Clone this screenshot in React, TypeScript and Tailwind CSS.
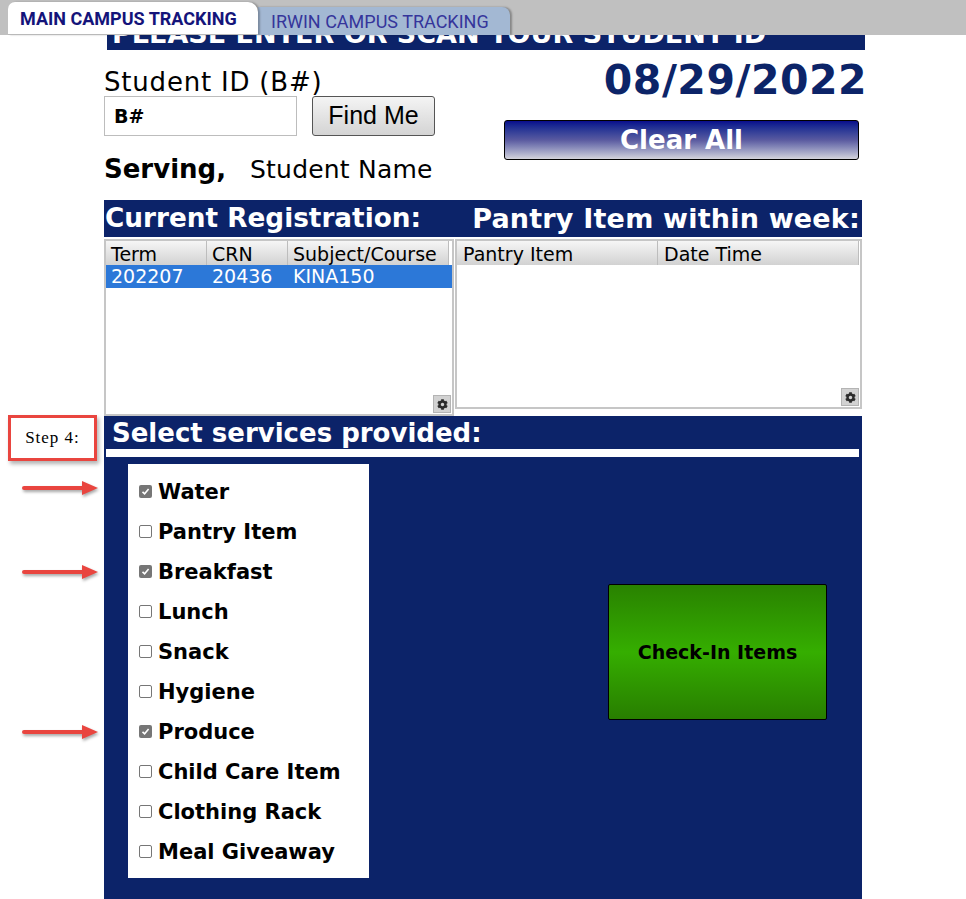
import { FaCog } from 'react-icons/fa';

const SERVICES = [
  { label: 'Water', checked: true },
  { label: 'Pantry Item', checked: false },
  { label: 'Breakfast', checked: true },
  { label: 'Lunch', checked: false },
  { label: 'Snack', checked: false },
  { label: 'Hygiene', checked: false },
  { label: 'Produce', checked: true },
  { label: 'Child Care Item', checked: false },
  { label: 'Clothing Rack', checked: false },
  { label: 'Meal Giveaway', checked: false },
];

function Arrow({ top }: { top: number }) {
  return (
    <svg
      className="absolute left-[20px] drop-shadow-[1px_2px_1.5px_rgba(0,0,0,0.35)]"
      style={{ top }}
      width="80"
      height="16"
      viewBox="0 0 80 16"
    >
      <rect x="2" y="6" width="64" height="4" rx="2" fill="#e9453f" />
      <polygon points="62,1 78,8 62,15" fill="#e9453f" />
    </svg>
  );
}

function Gear() {
  return (
    <div className="absolute bottom-[1px] right-[1px] w-[18px] h-[18px] bg-[#d2d2d2] border border-[#b4b4b4] flex items-center justify-center">
      <FaCog className="w-[11px] h-[11px] text-[#2b2b2b]" />
    </div>
  );
}

function Checkbox({ checked }: { checked: boolean }) {
  if (checked) {
    return (
      <span className="w-[13px] h-[13px] rounded-[2px] bg-[#767676] flex items-center justify-center shrink-0">
        <svg width="9" height="9" viewBox="0 0 9 9">
          <path d="M1.5 4.8 L3.6 6.8 L7.6 2" stroke="white" strokeWidth="1.6" fill="none" />
        </svg>
      </span>
    );
  }
  return <span className="w-[13px] h-[13px] rounded-[2px] border border-[#767676] bg-white shrink-0" />;
}

export default function App() {
  return (
    <div className="relative min-h-[899px] bg-white overflow-hidden font-['DejaVu_Sans',Verdana,sans-serif]">
      {/* Tabs */}
      <div className="relative z-10 h-[35px] bg-[#c0c0c0] flex items-end pl-[8px] font-['Roboto',sans-serif] text-[18px]">
        <div className="h-[33px] w-[250px] bg-white rounded-tl-[7px] rounded-tr-[10px] shadow-[2px_0_2px_rgba(0,0,0,0.25)] border-b border-[#b9b9b9] flex items-center pl-[12px] font-bold text-[#14147a] relative z-10">
          MAIN CAMPUS TRACKING
        </div>
        <div className="h-[28px] w-[252px] bg-[#a3b8d3] rounded-tr-[8px] shadow-[2px_0_2px_rgba(0,0,0,0.3)] flex items-center pl-[13px] text-[#35359b]">
          IRWIN CAMPUS TRACKING
        </div>
      </div>

      <div className="ml-[104px] w-[758px]">
        {/* Banner, top hidden behind the tab bar */}
        <div className="ml-[3px] w-[758px] h-[15px] overflow-hidden bg-[#0c2369]">
          <div className="mt-[-14px] pl-[5px] text-[27px] leading-[26px] font-bold text-white whitespace-nowrap">
            PLEASE ENTER OR SCAN YOUR STUDENT ID
          </div>
        </div>

        {/* Lookup area */}
        <div className="h-[150px] flex justify-between">
          <div className="flex flex-col">
            <div className="mt-[18px] text-[26px] leading-[28px] tracking-[0.8px] text-black">Student ID (B#)</div>
            <div className="flex gap-[15px]">
              <div className="w-[193px] h-[40px] border border-[#bdbdbd] flex items-center pl-[9px] text-[19px] font-bold text-black">
                B#
              </div>
              <button className="w-[123px] h-[40px] border border-[#555] rounded-[3px] bg-gradient-to-b from-[#f4f4f4] to-[#d4d4d4] font-['Liberation_Sans',Arial,sans-serif] text-[25px] text-black">
                Find Me
              </button>
            </div>
            <div className="mt-[18px] flex items-baseline gap-[24px] leading-[30px]">
              <span className="text-[26px] font-bold text-black">Serving,</span>
              <span className="text-[25px] tracking-[0.2px] text-black">Student Name</span>
            </div>
          </div>
          <div className="w-[363px] mr-[-5px] flex flex-col">
            <div className="mt-[10px] text-right text-[41px] leading-[41px] tracking-[0.5px] font-bold text-[#0c2468]">
              08/29/2022
            </div>
            <button className="mt-[19px] w-[355px] h-[40px] rounded-[3px] border border-black bg-gradient-to-b from-[#0a0a8c] via-[#5a5aa0] to-[#d4d4dc] text-white text-[26px] font-bold leading-none">
              Clear All
            </button>
          </div>
        </div>

        {/* Section header */}
        <div className="h-[37px] bg-[#0c2369] flex items-center text-white font-bold leading-[35px] whitespace-nowrap">
          <span className="pl-[1px] text-[26.3px]">Current Registration:</span>
          <span className="ml-auto pr-[2px] text-[27px] tracking-[0.2px]">Pantry Item within week:</span>
        </div>

        {/* Tables */}
        <div className="mt-[2px] flex items-start">
          <div className="relative w-[351px] h-[177px] border-2 border-[#c6c6c6] bg-white text-[19px] leading-[23px]">
            <div className="flex h-[24px] w-[343px] bg-gradient-to-b from-[#f6f6f6] to-[#d2d2d2] text-black">
              <div className="w-[101px] pl-[5px] border-r border-[#bdbdbd] leading-[26px]">Term</div>
              <div className="w-[81px] pl-[5px] border-r border-[#bdbdbd] leading-[26px]">CRN</div>
              <div className="flex-1 pl-[5px] border-r border-[#bdbdbd] leading-[26px]">Subject/Course</div>
            </div>
            <div className="flex h-[23px] bg-[#2c78d8] text-white">
              <div className="w-[101px] pl-[5px]">202207</div>
              <div className="w-[81px] pl-[5px]">20436</div>
              <div className="flex-1 pl-[5px]">KINA150</div>
            </div>
            <Gear />
          </div>
          <div className="relative ml-[1px] w-[408px] h-[170px] border-2 border-[#c6c6c6] bg-white text-[19px]">
            <div className="flex h-[24px] w-[402px] bg-gradient-to-b from-[#f6f6f6] to-[#d2d2d2] text-black leading-[26px]">
              <div className="w-[201px] pl-[6px] border-r border-[#bdbdbd]">Pantry Item</div>
              <div className="flex-1 pl-[6px] border-r border-[#bdbdbd]">Date Time</div>
            </div>
            <Gear />
          </div>
        </div>

        {/* Services */}
        <div className="h-[490px] bg-[#0c2369]">
          <div className="pt-[2px] pl-[8px] text-[26px] leading-[30px] font-bold text-white">
            Select services provided:
          </div>
          <div className="mt-[1px] ml-[2px] mr-[3px] h-[8px] bg-white" />
          <div className="mt-[7px] flex items-start">
            <div className="ml-[24px] w-[241px] py-[7px] bg-white">
              {SERVICES.map((s) => (
                <div key={s.label} className="h-[40px] flex items-center gap-[6px] pl-[11px]">
                  <Checkbox checked={s.checked} />
                  <span className="mt-[3px] text-[21px] font-bold text-black whitespace-nowrap">{s.label}</span>
                </div>
              ))}
            </div>
            <button className="mt-[120px] ml-[239px] w-[219px] h-[136px] rounded-[2px] border border-black bg-gradient-to-b from-[#298200] via-[#35ae00] to-[#287e00] text-black text-[19px] font-bold">
              Check-In Items
            </button>
          </div>
        </div>
      </div>

      {/* Annotations */}
      <div className="absolute left-[8px] top-[415px] w-[89px] h-[46px] border-[3px] border-[#e9453f] bg-white shadow-[2px_3px_4px_rgba(0,0,0,0.3)] flex items-center justify-center font-['Liberation_Serif',serif] text-[17px] tracking-[1px] text-black">
        Step 4:
      </div>
      <Arrow top={480} />
      <Arrow top={564} />
      <Arrow top={724} />
    </div>
  );
}
